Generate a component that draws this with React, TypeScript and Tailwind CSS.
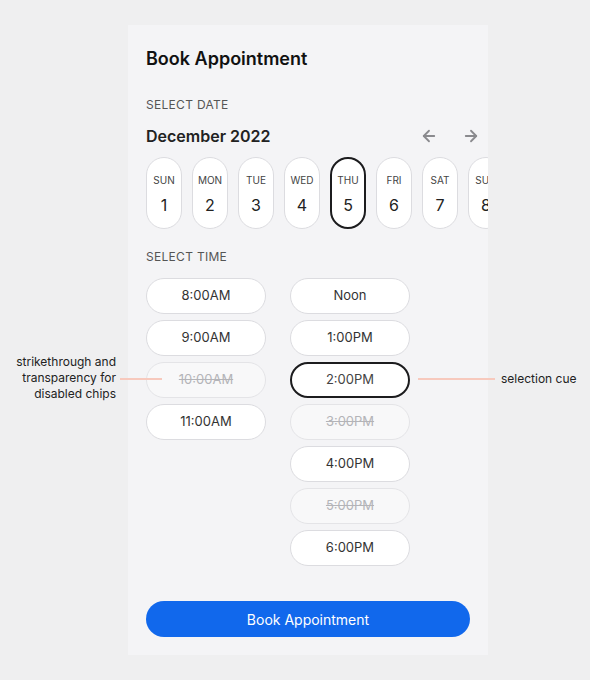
import { ArrowLeft, ArrowRight } from 'lucide-react';

const days = [
  { d: 'SUN', n: 1 },
  { d: 'MON', n: 2 },
  { d: 'TUE', n: 3 },
  { d: 'WED', n: 4 },
  { d: 'THU', n: 5 },
  { d: 'FRI', n: 6 },
  { d: 'SAT', n: 7 },
  { d: 'SUN', n: 8 },
];

type Slot = { t: string; off?: boolean; sel?: boolean };

const morning: Slot[] = [
  { t: '8:00AM' },
  { t: '9:00AM' },
  { t: '10:00AM', off: true },
  { t: '11:00AM' },
];

const afternoon: Slot[] = [
  { t: 'Noon' },
  { t: '1:00PM' },
  { t: '2:00PM', sel: true },
  { t: '3:00PM', off: true },
  { t: '4:00PM' },
  { t: '5:00PM', off: true },
  { t: '6:00PM' },
];

function TimeChip({ slot }: { slot: Slot }) {
  if (slot.off) {
    return (
      <div className="w-[120px] h-[36px] rounded-full border border-[#e4e4e7] bg-white/40 flex items-center justify-center text-[13px] text-[#b4b4b8] line-through">
        {slot.t}
      </div>
    );
  }
  return (
    <div
      className={
        slot.sel
          ? 'w-[120px] h-[36px] rounded-full border-2 border-[#1c1c1e] bg-white flex items-center justify-center text-[13px] text-[#444]'
          : 'w-[120px] h-[36px] rounded-full border border-[#dcdce0] bg-white flex items-center justify-center text-[13px] text-[#333]'
      }
    >
      {slot.t}
    </div>
  );
}

export default function App() {
  return (
    <div className="relative min-h-[680px] w-[590px] bg-[#efeff0] pt-[25px] pl-[128px]" style={{ fontFamily: 'Inter, "Noto Sans", sans-serif' }}>
      <div className="w-[360px] h-[630px] bg-[#f4f4f6] overflow-hidden pt-[20px] px-[18px] pb-[18px] flex flex-col">
        <h1 className="text-[18px] leading-[28px] font-semibold text-[#111]">Book Appointment</h1>

        <div className="mt-[24px] text-[12px] leading-[16px] text-[#555] tracking-wide">SELECT DATE</div>

        <div className="mt-[11px] flex items-center justify-between">
          <span className="text-[16px] leading-[24px] font-semibold text-[#222]">December 2022</span>
          <div className="flex items-center gap-[24px] -mr-[10px] text-[#8a8a8e]">
            <ArrowLeft size={18} strokeWidth={2.4} />
            <ArrowRight size={18} strokeWidth={2.4} />
          </div>
        </div>

        <div className="mt-[9px] flex gap-[10px] w-[400px]">
          {days.map((x, i) => (
            <div
              key={i}
              className={
                x.n === 5
                  ? 'shrink-0 w-[36px] h-[72px] rounded-full border-2 border-[#1c1c1e] bg-white flex flex-col items-center pt-[14px]'
                  : 'shrink-0 w-[36px] h-[72px] rounded-full border border-[#dcdce0] bg-white flex flex-col items-center pt-[15px]'
              }
            >
              <span className="text-[10px] leading-[14px] text-[#444]">{x.d}</span>
              <span className="mt-[6px] text-[16px] leading-[24px] text-[#222]">{x.n}</span>
            </div>
          ))}
        </div>

        <div className="mt-[20px] text-[12px] leading-[16px] text-[#555] tracking-wide">SELECT TIME</div>

        <div className="mt-[13px] flex gap-[24px]">
          <div className="flex flex-col gap-[6px]">
            {morning.map((s) => (
              <TimeChip key={s.t} slot={s} />
            ))}
          </div>
          <div className="flex flex-col gap-[6px]">
            {afternoon.map((s) => (
              <TimeChip key={s.t} slot={s} />
            ))}
          </div>
        </div>

        <button className="mt-auto w-[324px] h-[36px] rounded-full bg-[#1168ec] text-white text-[14px]">
          Book Appointment
        </button>
      </div>

      {/* annotations */}
      <div className="absolute left-0 top-[354px] w-[116px] text-right text-[12px] leading-[16px] text-[#222]">
        strikethrough and transparency for disabled chips
      </div>
      <div className="absolute left-[120px] top-[378px] w-[42px] h-[2px] bg-[#f7c9bd]" />
      <div className="absolute left-[418px] top-[378px] w-[77px] h-[2px] bg-[#f7c9bd]" />
      <div className="absolute left-[501px] top-[371px] text-[12px] leading-[16px] text-[#222]">selection cue</div>
    </div>
  );
}
